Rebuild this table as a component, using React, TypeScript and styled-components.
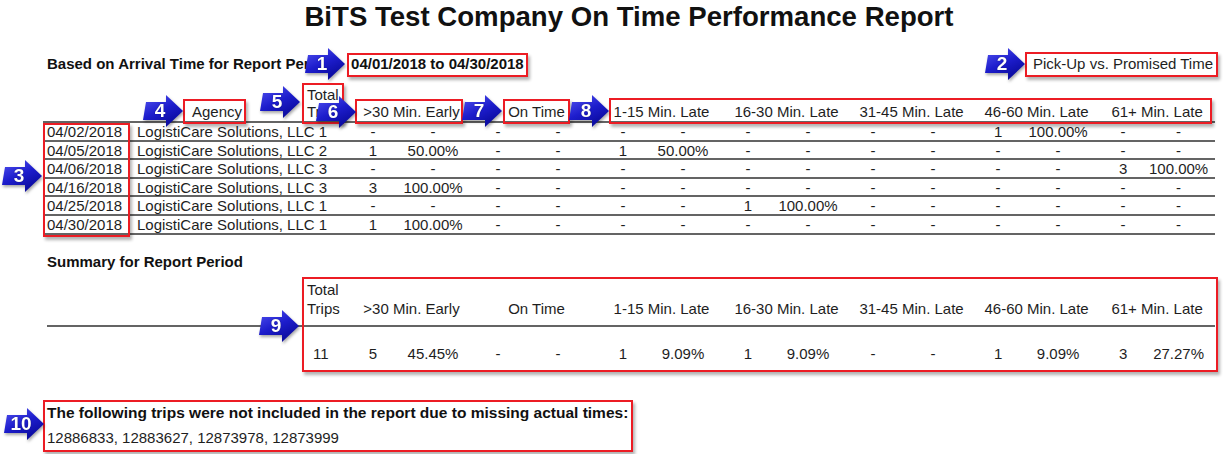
import React, { useId } from 'react';
import styled, { createGlobalStyle } from 'styled-components';

const GlobalStyle = createGlobalStyle`
  html, body { margin: 0; padding: 0; background: #fff; }
  body { font-family: "Liberation Sans", Arial, sans-serif; color: #1e1e1e; }
`;

const GROUPS = [
  '>30 Min. Early',
  'On Time',
  '1-15 Min. Late',
  '16-30 Min. Late',
  '31-45 Min. Late',
  '46-60 Min. Late',
  '61+ Min. Late',
];

const dash = (n: number) => Array.from({ length: n }, () => '-');

const ROWS: Array<{ date: string; agency: string; values: string[] }> = [
  { date: '04/02/2018', agency: 'LogistiCare Solutions, LLC 1', values: [...dash(10), '1', '100.00%', '-', '-'] },
  { date: '04/05/2018', agency: 'LogistiCare Solutions, LLC 2', values: ['1', '50.00%', '-', '-', '1', '50.00%', ...dash(8)] },
  { date: '04/06/2018', agency: 'LogistiCare Solutions, LLC 3', values: [...dash(12), '3', '100.00%'] },
  { date: '04/16/2018', agency: 'LogistiCare Solutions, LLC 3', values: ['3', '100.00%', ...dash(12)] },
  { date: '04/25/2018', agency: 'LogistiCare Solutions, LLC 1', values: [...dash(6), '1', '100.00%', ...dash(6)] },
  { date: '04/30/2018', agency: 'LogistiCare Solutions, LLC 1', values: ['1', '100.00%', ...dash(12)] },
];

const SUMMARY = ['5', '45.45%', '-', '-', '1', '9.09%', '1', '9.09%', '-', '-', '1', '9.09%', '3', '27.27%'];

// callout overlays (red frames + numbered blue arrows)
const FRAMES = [
  { x: 347, y: 53, w: 181, h: 24 },
  { x: 1025, y: 52, w: 193, h: 25 },
  { x: 43, y: 123, w: 87, h: 114 },
  { x: 183, y: 99, w: 63, h: 25 },
  { x: 302, y: 83, w: 42, h: 41 },
  { x: 355, y: 99, w: 108, h: 25 },
  { x: 503, y: 99, w: 67, h: 25 },
  { x: 609, y: 98, w: 603, h: 26 },
  { x: 302, y: 277, w: 916, h: 95 },
  { x: 43, y: 400, w: 590, h: 52 },
];

const ARROWS = [
  { n: 1, x: 305, y: 48 },
  { n: 2, x: 985, y: 48 },
  { n: 3, x: 2, y: 160 },
  { n: 4, x: 143, y: 95 },
  { n: 5, x: 260, y: 86 },
  { n: 6, x: 316, y: 96 },
  { n: 7, x: 462, y: 95 },
  { n: 8, x: 569, y: 95 },
  { n: 9, x: 259, y: 310 },
  { n: 10, x: 4, y: 408 },
];

const Page = styled.div`
  position: relative;
  box-sizing: border-box;
  width: 1227px;
  height: 454px;
  overflow: hidden;
  padding: 0 12px 0 43px;
`;

const Title = styled.h1`
  margin: 0;
  font-size: 27.6px;
  line-height: 34px;
  font-weight: bold;
  text-align: center;
  color: #111;
`;

const PeriodRow = styled.div`
  display: flex;
  justify-content: space-between;
  align-items: baseline;
  margin-top: 21px;
  padding: 0 2px 0 4px;
  line-height: 18px;
`;

const PeriodLabel = styled.span`
  font-size: 15px;
  font-weight: bold;
  color: #111;
`;

const PeriodRange = styled.span`
  margin-left: 14px;
`;

const PeriodBasis = styled.span`
  font-size: 15px;
`;

const Table = styled.table<{ $inset?: number }>`
  border-collapse: separate;
  border-spacing: 0;
  table-layout: fixed;
  width: ${p => 1172 - (p.$inset ?? 0)}px;
  margin-left: ${p => p.$inset ?? 0}px;
  font-size: 15px;
  color: #1e1e1e;
`;

const HeadCell = styled.th<{ $align?: string; $pad?: number }>`
  font-weight: normal;
  vertical-align: bottom;
  text-align: ${p => p.$align ?? 'center'};
  padding: 0 0 ${p => p.$pad ?? 1}px ${p => (p.$align === 'left' ? 4 : 0)}px;
  white-space: nowrap;
  border-bottom: 2px solid #646464;
`;

const DetailHead = styled(HeadCell)`
  line-height: 17px;
`;

const SummaryHead = styled(HeadCell)`
  line-height: 19px;
`;

const Cell = styled.td<{ $kind?: 'date' | 'text' | 'count' | 'pct' }>`
  white-space: nowrap;
  line-height: 15.6px;
  padding: 1px 0 0;
  padding-left: ${p => (p.$kind === 'date' ? 4 : p.$kind === 'text' ? 6 : 0)}px;
  padding-right: ${p => (p.$kind === 'pct' ? 5 : 0)}px;
  text-align: ${p => (p.$kind === 'count' || p.$kind === 'pct' ? 'center' : 'left')};
  border-bottom: 2px solid #646464;
`;

const SummaryCell = styled.td<{ $kind?: 'total' | 'count' | 'pct' }>`
  white-space: nowrap;
  line-height: 18px;
  padding: 18px 0 10px;
  padding-left: ${p => (p.$kind === 'total' ? 10 : 0)}px;
  padding-right: ${p => (p.$kind === 'pct' ? 5 : 0)}px;
  text-align: ${p => (p.$kind === 'total' ? 'left' : 'center')};
`;

const SectionTitle = styled.div<{ $size?: number; $top: number }>`
  margin-top: ${p => p.$top}px;
  padding-left: 4px;
  font-size: ${p => p.$size ?? 15}px;
  font-weight: bold;
  line-height: 18px;
  color: #111;
`;

const TripList = styled.div`
  margin-top: 7px;
  padding-left: 4px;
  font-size: 15px;
  line-height: 18px;
`;

const Frame = styled.div`
  position: absolute;
  box-sizing: border-box;
  border: 2px solid #ec1c24;
  box-shadow: 2px 3px 3px rgba(0, 0, 0, 0.3);
  pointer-events: none;
`;

const ArrowWrap = styled.div`
  position: absolute;
  width: 40px;
  height: 32px;
  filter: drop-shadow(1px 2px 1.5px rgba(0, 0, 0, 0.35));
`;

const ArrowNum = styled.span`
  position: absolute;
  left: 1px;
  top: 0;
  width: 32px;
  height: 32px;
  display: flex;
  align-items: center;
  justify-content: center;
  color: #fff;
  font-size: 19px;
  font-weight: bold;
  text-shadow: 0 0 1px rgba(0, 0, 60, 0.8);
`;

const Columns: React.FC<{ first: number }> = ({ first }) => {
  const widths = [first, 172, 46];
  GROUPS.forEach((_, i) => widths.push(48, i === GROUPS.length - 1 ? 68 : 77));
  return (
    <colgroup>
      {widths.map((w, i) => (
        <col key={i} style={{ width: w }} />
      ))}
    </colgroup>
  );
};

const Arrow: React.FC<{ n: number; x: number; y: number }> = ({ n, x, y }) => {
  const id = useId();
  return (
    <ArrowWrap style={{ left: x, top: y }}>
      <svg width="40" height="32" viewBox="0 0 40 32">
        <defs>
          <linearGradient id={id} x1="0" y1="0" x2="0.6" y2="1">
            <stop offset="0" stopColor="#5454f2" />
            <stop offset="0.55" stopColor="#1d1dcc" />
            <stop offset="1" stopColor="#0a0a9c" />
          </linearGradient>
        </defs>
        <polygon points="3,7 23,7 23,0 40,16 23,32 23,25 0,25" fill={`url(#${id})`} />
      </svg>
      <ArrowNum>{n}</ArrowNum>
    </ArrowWrap>
  );
};

export default function App() {
  return (
    <>
      <GlobalStyle />
      <Page>
        <Title>BiTS Test Company On Time Performance Report</Title>

        <PeriodRow>
          <PeriodLabel>
            Based on Arrival Time for Report Period:
            <PeriodRange>04/01/2018 to 04/30/2018</PeriodRange>
          </PeriodLabel>
          <PeriodBasis>Pick-Up vs. Promised Time</PeriodBasis>
        </PeriodRow>

        <Table style={{ marginTop: 13 }}>
          <Columns first={88} />
          <thead>
            <tr>
              <DetailHead />
              <DetailHead>Agency</DetailHead>
              <DetailHead $align="left">
                Total
                <br />
                Trips
              </DetailHead>
              {GROUPS.map(g => (
                <DetailHead key={g} colSpan={2}>
                  {g}
                </DetailHead>
              ))}
            </tr>
          </thead>
          <tbody>
            {ROWS.map(r => (
              <tr key={r.date}>
                <Cell $kind="date">{r.date}</Cell>
                <Cell $kind="text" colSpan={2}>
                  {r.agency}
                </Cell>
                {r.values.map((v, i) => (
                  <Cell key={i} $kind={i % 2 === 0 ? 'count' : 'pct'}>
                    {v}
                  </Cell>
                ))}
              </tr>
            ))}
          </tbody>
        </Table>

        <SectionTitle $top={18}>Summary for Report Period</SectionTitle>

        <Table $inset={4} style={{ marginTop: 9 }}>
          <Columns first={84} />
          <thead>
            <tr>
              <SummaryHead colSpan={2} />
              <SummaryHead $align="left" $pad={7}>
                Total
                <br />
                Trips
              </SummaryHead>
              {GROUPS.map(g => (
                <SummaryHead key={g} colSpan={2} $pad={7}>
                  {g}
                </SummaryHead>
              ))}
            </tr>
          </thead>
          <tbody>
            <tr>
              <SummaryCell colSpan={2} />
              <SummaryCell $kind="total">11</SummaryCell>
              {SUMMARY.map((v, i) => (
                <SummaryCell key={i} $kind={i % 2 === 0 ? 'count' : 'pct'}>
                  {v}
                </SummaryCell>
              ))}
            </tr>
          </tbody>
        </Table>

        <SectionTitle $top={31} $size={15.5}>
          The following trips were not included in the report due to missing actual times:
        </SectionTitle>
        <TripList>12886833, 12883627, 12873978, 12873999</TripList>

        {FRAMES.map((f, i) => (
          <Frame key={i} style={{ left: f.x, top: f.y, width: f.w, height: f.h }} />
        ))}
        {ARROWS.map(a => (
          <Arrow key={a.n} {...a} />
        ))}
      </Page>
    </>
  );
}
